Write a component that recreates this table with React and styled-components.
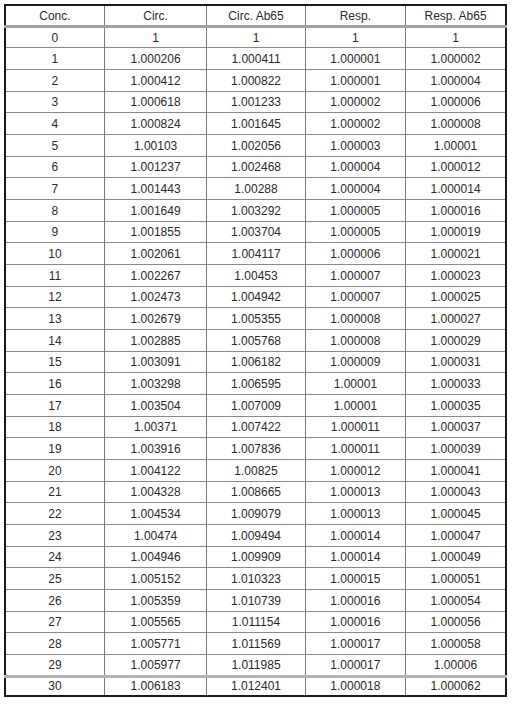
import React from 'react';
import styled, { createGlobalStyle } from 'styled-components';

const GlobalStyle = createGlobalStyle`
  html, body {
    margin: 0;
    padding: 0;
    background: #ffffff;
  }
  body {
    font-family: "Liberation Sans", "Noto Sans CJK KR", sans-serif;
  }
`;

const Page = styled.div`
  padding: 4px 0 0 4px;
`;

const Table = styled.table`
  width: 503px;
  border-collapse: collapse;
  table-layout: fixed;
  border: 2px solid #1a1a1a;
  color: #2a2a2a;
  font-size: 12px;
`;

const Col = styled.col`
  width: ${(p) => p.w}px;
`;

const HeadCell = styled.th`
  height: 19px;
  padding: 0;
  font-weight: normal;
  text-align: center;
  border-left: 1px solid #7a7a7a;
  border-bottom: 3px solid #a0a0a0;
  &:first-child {
    border-left: none;
  }
`;

const Row = styled.tr`
  height: ${(p) => p.h}px;
  border-bottom: ${(p) => (p.thick ? '3px solid #b4b4b4' : '1px solid #8a8a8a')};
`;

const Cell = styled.td`
  padding: 0;
  text-align: center;
  border-left: 1px solid #7a7a7a;
  &:first-child {
    border-left: none;
  }
`;

const headers = ['Conc.', 'Circ.', 'Circ. Ab65', 'Resp.', 'Resp. Ab65'];

const rows = [
  ['0', '1', '1', '1', '1'],
  ['1', '1.000206', '1.000411', '1.000001', '1.000002'],
  ['2', '1.000412', '1.000822', '1.000001', '1.000004'],
  ['3', '1.000618', '1.001233', '1.000002', '1.000006'],
  ['4', '1.000824', '1.001645', '1.000002', '1.000008'],
  ['5', '1.00103', '1.002056', '1.000003', '1.00001'],
  ['6', '1.001237', '1.002468', '1.000004', '1.000012'],
  ['7', '1.001443', '1.00288', '1.000004', '1.000014'],
  ['8', '1.001649', '1.003292', '1.000005', '1.000016'],
  ['9', '1.001855', '1.003704', '1.000005', '1.000019'],
  ['10', '1.002061', '1.004117', '1.000006', '1.000021'],
  ['11', '1.002267', '1.00453', '1.000007', '1.000023'],
  ['12', '1.002473', '1.004942', '1.000007', '1.000025'],
  ['13', '1.002679', '1.005355', '1.000008', '1.000027'],
  ['14', '1.002885', '1.005768', '1.000008', '1.000029'],
  ['15', '1.003091', '1.006182', '1.000009', '1.000031'],
  ['16', '1.003298', '1.006595', '1.00001', '1.000033'],
  ['17', '1.003504', '1.007009', '1.00001', '1.000035'],
  ['18', '1.00371', '1.007422', '1.000011', '1.000037'],
  ['19', '1.003916', '1.007836', '1.000011', '1.000039'],
  ['20', '1.004122', '1.00825', '1.000012', '1.000041'],
  ['21', '1.004328', '1.008665', '1.000013', '1.000043'],
  ['22', '1.004534', '1.009079', '1.000013', '1.000045'],
  ['23', '1.00474', '1.009494', '1.000014', '1.000047'],
  ['24', '1.004946', '1.009909', '1.000014', '1.000049'],
  ['25', '1.005152', '1.010323', '1.000015', '1.000051'],
  ['26', '1.005359', '1.010739', '1.000016', '1.000054'],
  ['27', '1.005565', '1.011154', '1.000016', '1.000056'],
  ['28', '1.005771', '1.011569', '1.000017', '1.000058'],
  ['29', '1.005977', '1.011985', '1.000017', '1.00006'],
  ['30', '1.006183', '1.012401', '1.000018', '1.000062'],
];

const widths = [99, 102, 98, 100, 100];

// row pitch in the picture is about 21.67px, so alternate 21 / 22
const rowHeight = (i) => (i % 3 === 0 ? 21 : 22);

const App = () => {
  return (
    <Page>
      <GlobalStyle />
      <Table>
        <colgroup>
          {widths.map((w, i) => (
            <Col key={i} w={w} />
          ))}
        </colgroup>
        <thead>
          <tr>
            {headers.map((h) => (
              <HeadCell key={h}>{h}</HeadCell>
            ))}
          </tr>
        </thead>
        <tbody>
          {rows.map((r, i) => (
            <Row key={r[0]} h={i === 30 ? 19 : rowHeight(i)} thick={i === 29}>
              {r.map((v, j) => (
                <Cell key={j}>{v}</Cell>
              ))}
            </Row>
          ))}
        </tbody>
      </Table>
    </Page>
  );
};

export default App;
